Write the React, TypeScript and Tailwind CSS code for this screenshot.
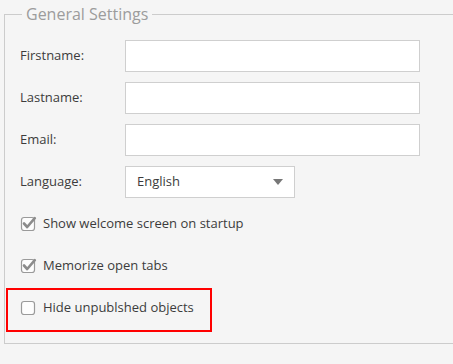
import { useState } from "react"

const font = { fontFamily: '"Open Sans", "Liberation Sans", sans-serif' }

function CheckBox({ checked }: { checked: boolean }) {
  return (
    <svg width="17" height="16" viewBox="0 0 17 16" className="shrink-0">
      <rect x="1.5" y="1.5" width="13" height="13" rx="2.5" fill="#fdfdfd" stroke="#9a9a9a" strokeWidth="1.2" />
      {checked && (
        <path d="M4 7.5 L7.2 11 L14.8 2.2" fill="none" stroke="#8c8c8c" strokeWidth="2.6" strokeLinecap="round" strokeLinejoin="round" />
      )}
    </svg>
  )
}

function TextRow({ label }: { label: string }) {
  return (
    <div className="flex items-center h-[32px]">
      <label className="w-[105px] text-[13px] text-[#3c3c3c]">{label}</label>
      <input type="text" className="w-[295px] h-[32px] bg-white border border-[#cfcfcf] outline-none px-2 text-[13px]" />
    </div>
  )
}

function CheckRow({ label, checked, onToggle }: { label: string; checked: boolean; onToggle: () => void }) {
  return (
    <div className="flex items-center h-[32px] gap-[6px] cursor-pointer" onClick={onToggle}>
      <CheckBox checked={checked} />
      <span className="text-[13px] text-[#3c3c3c]">{label}</span>
    </div>
  )
}

export default function App() {
  const [welcome, setWelcome] = useState(true)
  const [tabs, setTabs] = useState(true)
  const [hide, setHide] = useState(false)

  return (
    <div className="w-[453px] h-[364px] bg-[#f5f5f5] overflow-hidden" style={font}>
      <fieldset className="ml-[4px] mt-[2px] w-[470px] border border-[#cccccc] pl-[15px] pt-[14px] pb-[11px]">
        <legend className="ml-[2px] px-[4px] text-[16px] leading-[24px] text-[#9c9c9c]">General Settings</legend>

        <div className="flex flex-col gap-[10px]">
          <TextRow label="Firstname:" />
          <TextRow label="Lastname:" />
          <TextRow label="Email:" />

          {/* Language select */}
          <div className="flex items-center h-[32px]">
            <label className="w-[105px] text-[13px] text-[#3c3c3c]">Language:</label>
            <div className="w-[170px] h-[32px] bg-white border border-[#cfcfcf] flex items-center justify-between pl-[11px] pr-[11px]">
              <span className="text-[13px] text-[#3c3c3c]">English</span>
              <svg width="10" height="6" viewBox="0 0 10 6">
                <path d="M0 0 L10 0 L5 6 Z" fill="#777777" />
              </svg>
            </div>
          </div>

          <CheckRow label="Show welcome screen on startup" checked={welcome} onToggle={() => setWelcome(!welcome)} />
          <CheckRow label="Memorize open tabs" checked={tabs} onToggle={() => setTabs(!tabs)} />
        </div>

        {/* highlighted option */}
        <div className="-ml-[14px] mt-[6px] w-[206px] border-2 border-[#ff0000] pl-[12px] pt-[2px] pb-[6px]">
          <CheckRow label="Hide unpublshed objects" checked={hide} onToggle={() => setHide(!hide)} />
        </div>
      </fieldset>
    </div>
  )
}
